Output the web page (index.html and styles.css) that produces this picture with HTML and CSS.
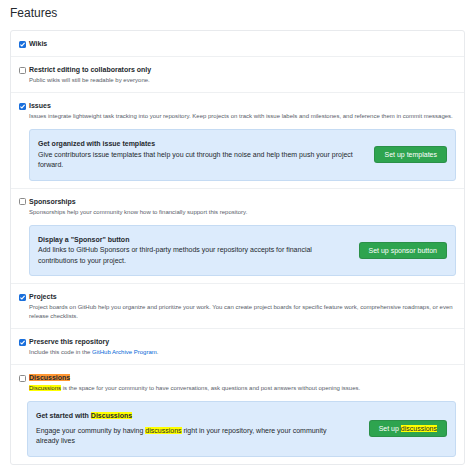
FILE: index.html
```html
<!DOCTYPE html>
<html lang="en">
<head>
<meta charset="utf-8">
<title>Features</title>
<link rel="stylesheet" href="styles.css">
</head>
<body>
<h2 class="heading">Features</h2>
<div class="box">
  <div class="row">
    <label class="check"><span class="cb cb-on"><svg viewBox="0 0 8 8" width="7" height="7"><path d="M1.6 4.1 L3.3 5.7 L6.4 2.2" fill="none" stroke="#fff" stroke-width="1.3"/></svg></span><span class="title">Wikis</span></label>
  </div>
  <div class="row">
    <label class="check"><span class="cb"></span><span class="title">Restrict editing to collaborators only</span></label>
    <p class="desc">Public wikis will still be readable by everyone.</p>
  </div>
  <div class="row">
    <label class="check"><span class="cb cb-on"><svg viewBox="0 0 8 8" width="7" height="7"><path d="M1.6 4.1 L3.3 5.7 L6.4 2.2" fill="none" stroke="#fff" stroke-width="1.3"/></svg></span><span class="title">Issues</span></label>
    <p class="desc">Issues integrate lightweight task tracking into your repository. Keep projects on track with issue labels and milestones, and reference them in commit messages.</p>
    <div class="flash">
      <div class="flash-text">
        <div class="flash-title">Get organized with issue templates</div>
        <div>Give contributors issue templates that help you cut through the noise and help them push your project forward.</div>
      </div>
      <button class="btn">Set up templates</button>
    </div>
  </div>
  <div class="row">
    <label class="check"><span class="cb"></span><span class="title">Sponsorships</span></label>
    <p class="desc">Sponsorships help your community know how to financially support this repository.</p>
    <div class="flash">
      <div class="flash-text">
        <div class="flash-title">Display a "Sponsor" button</div>
        <div>Add links to GitHub Sponsors or third-party methods your repository accepts for financial contributions to your project.</div>
      </div>
      <button class="btn">Set up sponsor button</button>
    </div>
  </div>
  <div class="row">
    <label class="check"><span class="cb cb-on"><svg viewBox="0 0 8 8" width="7" height="7"><path d="M1.6 4.1 L3.3 5.7 L6.4 2.2" fill="none" stroke="#fff" stroke-width="1.3"/></svg></span><span class="title">Projects</span></label>
    <p class="desc">Project boards on GitHub help you organize and prioritize your work. You can create project boards for specific feature work, comprehensive roadmaps, or even release checklists.</p>
  </div>
  <div class="row">
    <label class="check"><span class="cb cb-on"><svg viewBox="0 0 8 8" width="7" height="7"><path d="M1.6 4.1 L3.3 5.7 L6.4 2.2" fill="none" stroke="#fff" stroke-width="1.3"/></svg></span><span class="title">Preserve this repository</span></label>
    <p class="desc">Include this code in the <a class="link" href="#">GitHub Archive Program</a>.</p>
  </div>
  <div class="row">
    <label class="check"><span class="cb"></span><span class="title"><mark class="hl-active">Discussions</mark></span></label>
    <p class="desc"><mark class="hl">Discussions</mark> is the space for your community to have conversations, ask questions and post answers without opening issues.</p>
    <div class="flash flash-wide">
      <div class="flash-text">
        <div class="flash-title flash-title-spaced">Get started with <mark class="hl">Discussions</mark></div>
        <div>Engage your community by having <mark class="hl">discussions</mark> right in your repository, where your community already lives</div>
      </div>
      <button class="btn">Set up <mark class="hl">discussions</mark></button>
    </div>
  </div>
</div>
</body>
</html>
```
FILE: styles.css
```css
html, body {
  margin: 0;
  background: #ffffff;
}
body {
  padding: 4px 9px 0 10px;
  font-family: "Liberation Sans", Arial, Helvetica, sans-serif;
  color: #24292e;
}
.heading {
  margin: 0 0 8px;
  font-size: 12px;
  line-height: 18px;
  font-weight: 400;
}
.box {
  border: 1px solid #e8eaed;
  border-radius: 3px;
}
.row {
  padding: 8px 8px 7px 8px;
  border-top: 1px solid #eef0f2;
}
.row:first-child {
  border-top: 0;
}
.check {
  display: flex;
  align-items: center;
  gap: 3px;
}
.cb {
  flex: none;
  box-sizing: border-box;
  width: 7px;
  height: 7px;
  border: 1px solid #8a8a8a;
  border-radius: 1.5px;
  background: #ffffff;
  display: flex;
  align-items: center;
  justify-content: center;
}
.cb-on {
  border: 0;
  background: #1a6fdc;
}
.cb svg {
  display: block;
}
.title {
  font-size: 7px;
  line-height: 10px;
  font-weight: 700;
}
.desc {
  margin: 1px 0 0 10px;
  font-size: 6px;
  line-height: 9px;
  color: #586069;
}
.link {
  color: #0366d6;
  text-decoration: none;
}
.flash {
  margin: 8px 0 0 10px;
  padding: 9px 8px;
  display: flex;
  align-items: center;
  gap: 14px;
  background: #dcebfc;
  border: 1px solid #c5dbf3;
  border-radius: 3px;
  font-size: 7px;
  line-height: 10.5px;
  color: #24292e;
}
.flash-wide {
  margin-left: 8px;
  gap: 24px;
}
.flash-text {
  flex: 1;
  min-width: 0;
}
.flash-title {
  font-weight: 700;
}
.flash-title-spaced {
  margin-bottom: 4px;
}
.btn {
  flex: none;
  height: 17px;
  padding: 0 9px;
  border: 1px solid rgba(27, 31, 35, 0.15);
  border-radius: 3px;
  background: #2ea44f;
  color: #ffffff;
  font-family: "Liberation Sans", Arial, Helvetica, sans-serif;
  font-size: 7px;
  line-height: 15px;
}
mark {
  padding: 0;
  color: inherit;
}
.hl {
  background: #ffff00;
  color: #24292e;
}
.hl-active {
  background: #ff9632;
  color: #24292e;
}
```
